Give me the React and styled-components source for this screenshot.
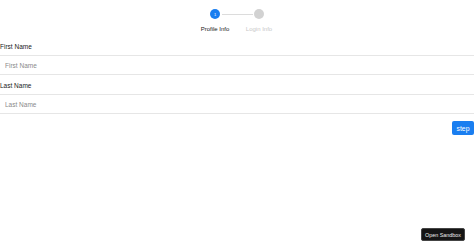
import React, { useState } from "react";
import styled, { createGlobalStyle } from "styled-components";

const GlobalStyle = createGlobalStyle`
  html, body {
    margin: 0;
    padding: 0;
    background: #fff;
    font-family: "Liberation Sans", Arial, sans-serif;
  }
  * { box-sizing: border-box; }
`;

const Page = styled.div`
  width: 100%;
  min-height: 248px;
  display: flex;
  flex-direction: column;
`;

// Stepper
const Stepper = styled.div`
  display: flex;
  flex-direction: column;
  align-items: center;
  padding-top: 9px;
`;

const DotRow = styled.div`
  display: flex;
  align-items: center;
`;

const Dot = styled.div`
  width: 10px;
  height: 10px;
  border-radius: 50%;
  background: ${(p) => (p.$active ? "#1a7ef0" : "#d2d2d2")};
  color: #fff;
  font-size: 4px;
  display: flex;
  align-items: center;
  justify-content: center;
`;

const Connector = styled.div`
  width: 31px;
  height: 1px;
  margin: 0 1.5px;
  background: #dcdcdc;
`;

const LabelRow = styled.div`
  display: grid;
  grid-template-columns: 44px 44px;
  margin-top: 6px;
`;

const StepLabel = styled.div`
  text-align: center;
  white-space: nowrap;
  font-size: 6px;
  line-height: 8px;
  color: ${(p) => (p.$active ? "#222" : "#c8c8c8")};
`;

// Form
const Form = styled.form`
  display: flex;
  flex-direction: column;
  margin-top: 10px;
`;

const Group = styled.div`
  display: flex;
  flex-direction: column;
  margin-bottom: 7px;
`;

const Label = styled.label`
  font-size: 6.5px;
  line-height: 8px;
  color: #1a1a1a;
  margin-bottom: 4px;
`;

const Input = styled.input`
  width: 100%;
  height: 20px;
  border: none;
  border-top: 1px solid #e6e6e6;
  border-bottom: 1px solid #e6e6e6;
  padding: 0 5px;
  font-family: inherit;
  font-size: 6.5px;
  color: #333;
  outline: none;

  &::placeholder {
    color: #8a8a8a;
  }
`;

const Actions = styled.div`
  display: flex;
  justify-content: flex-end;
`;

const StepButton = styled.button`
  width: 22px;
  height: 14px;
  padding: 0;
  border: none;
  border-radius: 2px;
  background: #1a7ef0;
  color: #fff;
  font-family: inherit;
  font-size: 6.8px;
  cursor: pointer;
`;

const SandboxButton = styled.button`
  position: fixed;
  left: 421px;
  top: 228px;
  width: 44px;
  height: 13px;
  padding: 0;
  border: 1px solid #444;
  border-radius: 2px;
  background: #151515;
  color: #eee;
  font-family: inherit;
  font-size: 5.4px;
`;

export default function App() {
  const [form, setForm] = useState({ firstName: "", lastName: "" });

  const handleChange = (e) => {
    setForm({ ...form, [e.target.name]: e.target.value });
  };

  return (
    <Page>
      <GlobalStyle />
      <Stepper>
        <DotRow>
          <Dot $active>1</Dot>
          <Connector />
          <Dot />
        </DotRow>
        <LabelRow>
          <StepLabel $active>Profile Info</StepLabel>
          <StepLabel>Login Info</StepLabel>
        </LabelRow>
      </Stepper>
      <Form onSubmit={(e) => e.preventDefault()}>
        <Group>
          <Label>First Name</Label>
          <Input
            name="firstName"
            placeholder="First Name"
            value={form.firstName}
            onChange={handleChange}
          />
        </Group>
        <Group>
          <Label>Last Name</Label>
          <Input
            name="lastName"
            placeholder="Last Name"
            value={form.lastName}
            onChange={handleChange}
          />
        </Group>
        <Actions>
          <StepButton type="submit">step</StepButton>
        </Actions>
      </Form>
      <SandboxButton>Open Sandbox</SandboxButton>
    </Page>
  );
}
